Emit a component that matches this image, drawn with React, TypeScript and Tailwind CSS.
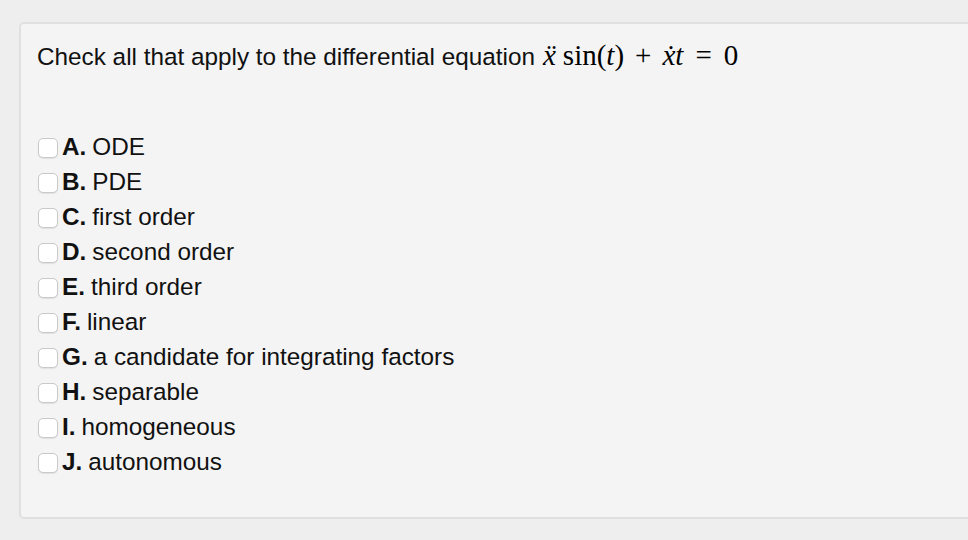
import React from 'react'

const options = [
    { key: 'A', text: 'ODE' },
    { key: 'B', text: 'PDE' },
    { key: 'C', text: 'first order' },
    { key: 'D', text: 'second order' },
    { key: 'E', text: 'third order' },
    { key: 'F', text: 'linear' },
    { key: 'G', text: 'a candidate for integrating factors' },
    { key: 'H', text: 'separable' },
    { key: 'I', text: 'homogeneous' },
    { key: 'J', text: 'autonomous' },
]

function MathExpr() {
    // ẍ sin(t) + ẋt = 0
    return (
        <span className="ml-[8px] text-[29px] text-black" style={{ fontFamily: '"Liberation Serif", serif' }}>
            <i>ẍ</i>
            <span className="ml-[7px]">sin</span>
            <span>(</span>
            <i>t</i>
            <span>)</span>
            <span className="mx-[11px]">+</span>
            <i>ẋt</i>
            <span className="mx-[12px]">=</span>
            <span>0</span>
        </span>
    )
}

export default function App() {
    return (
        <div className="w-[968px] h-[540px] overflow-hidden bg-[#eeeeee] pt-[22px] pl-[19px]" style={{ fontFamily: '"Liberation Sans", Arial, sans-serif' }}>
            <div className="w-[1000px] h-[497px] rounded-[5px] border-2 border-[#e0e0e0] bg-[#f4f4f4] pl-[16px] pt-[10px]">
                {/* Question */}
                <div className="flex items-baseline h-[44px] text-[24.3px] text-[#111]">
                    <span>Check all that apply to the differential equation</span>
                    <MathExpr />
                </div>

                {/* Options */}
                <div className="mt-[52px] flex flex-col">
                    {options.map(o => (
                        <label key={o.key} className="flex items-center h-[35px] text-[24.3px] text-[#111]">
                            <span className="w-[20px] h-[20px] rounded-[5px] border border-[#c9c9c9] bg-white shadow-[0_1px_1px_rgba(0,0,0,0.08)] mr-[4px] ml-[1px]" />
                            <span className="font-bold">{o.key}.</span>
                            <span className="ml-[6px]">{o.text}</span>
                        </label>
                    ))}
                </div>
            </div>
        </div>
    )
}
